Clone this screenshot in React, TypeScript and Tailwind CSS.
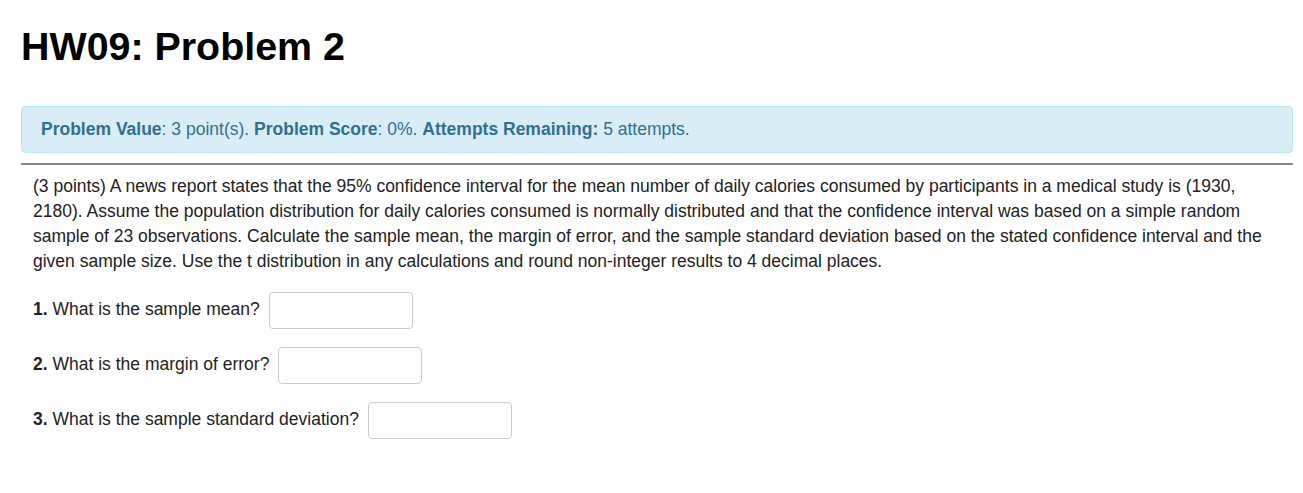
import React from "react";

const questions = [
  { n: "1.", q: "What is the sample mean?" },
  { n: "2.", q: "What is the margin of error?" },
  { n: "3.", q: "What is the sample standard deviation?" },
];

export default function App() {
  return (
    <div
      className="min-h-[493px] bg-white text-[#222] pl-[21px] pr-[10px]"
      style={{ fontFamily: '"Liberation Sans", Arial, sans-serif' }}
    >
      <h1 className="pt-[24px] text-[39.4px] leading-[44px] font-bold text-black">HW09: Problem 2</h1>
      <div className="mt-[38px] h-[47px] flex items-center rounded-[4px] border border-[#bce8f1] bg-[#d9edf7] px-[19px] text-[17.5px] text-[#31708f]">
        <span>
          <b>Problem Value</b>: 3 point(s). <b>Problem Score</b>: 0%. <b>Attempts Remaining:</b> 5 attempts.
        </span>
      </div>
      <div className="mt-[10px] border-t-2 border-[#8a8a8a]" />
      <div className="px-[12px] pt-[9px] text-[17.5px] leading-[25.14px]">
        <p>
          (3 points) A news report states that the 95% confidence interval for the mean number of daily calories consumed by participants in a medical study is (1930, 2180). Assume the population distribution for daily calories consumed is normally distributed and that the confidence interval was based on a simple random sample of 23 observations. Calculate the sample mean, the margin of error, and the sample standard deviation based on the stated confidence interval and the given sample size. Use the t distribution in any calculations and round non-integer results to 4 decimal places.
        </p>
        <div className="mt-[17px] flex flex-col gap-[18px]">
          {questions.map((item) => (
            <div key={item.n} className="flex items-center">
              <span>
                <b>{item.n}</b> {item.q}
              </span>
              <input
                type="text"
                className="ml-[9px] h-[37px] w-[144px] rounded-[4px] border border-[#ccc] bg-white outline-none"
              />
            </div>
          ))}
        </div>
      </div>
    </div>
  );
}
